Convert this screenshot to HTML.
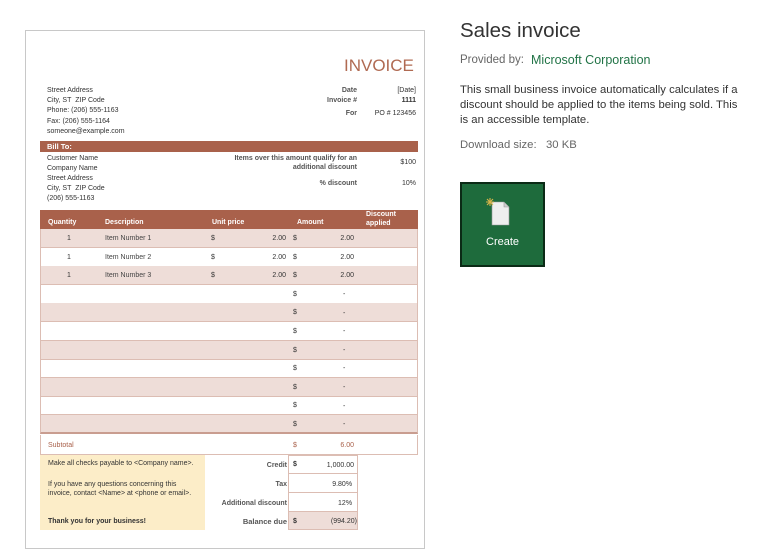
<!DOCTYPE html>
<html><head><meta charset="utf-8"><style>
*{margin:0;padding:0;box-sizing:border-box}
body{width:768px;height:559px;background:#fff;position:relative;overflow:hidden;font-family:"Liberation Sans",Arial,sans-serif}
.a{position:absolute;white-space:nowrap}
.doc{font-size:7px;color:#333;line-height:1}
.r{text-align:right}
.row{position:absolute;left:40px;width:378px;height:19px;border-bottom:1px solid #dcbdb3;border-left:1px solid #dcbdb3;border-right:1px solid #dcbdb3}
.sh{background:#eeddd8}
.w{color:#fff;font-weight:bold}
</style></head><body>
<div class="a" style="left:25px;top:30px;width:400px;height:519px;border:1px solid #c8c8c8"></div>

<div class="a" style="left:344px;top:56px;font-size:17px;color:#b06a52;">INVOICE</div>
<div class="a doc" style="left:47px;top:86px;line-height:10.2px">Street Address<br>City, ST&nbsp; ZIP Code<br>Phone: (206) 555-1163<br>Fax: (206) 555-1164<br>someone@example.com</div>
<div class="a doc r" style="left:300px;top:86px;width:57px;line-height:10px;font-weight:bold;color:#555">Date<br>Invoice #</div>
<div class="a doc r" style="left:300px;top:110px;width:57px;font-weight:bold;color:#555">For</div>
<div class="a doc r" style="left:370px;top:86px;width:46px;line-height:10px">[Date]<br><b>1111</b></div>
<div class="a doc r" style="left:360px;top:110px;width:56px">PO # 123456</div>

<div class="a" style="left:40px;top:141px;width:378px;height:11px;background:#a9614b"></div>
<div class="a doc w" style="left:47px;top:143px;font-size:7.5px">Bill To:</div>
<div class="a doc" style="left:47px;top:154px;line-height:10px">Customer Name<br>Company Name<br>Street Address<br>City, ST&nbsp; ZIP Code<br>(206) 555-1163</div>
<div class="a doc r" style="left:200px;top:154px;width:157px;line-height:9px;font-weight:bold;color:#555">Items over this amount qualify for an<br>additional discount</div>
<div class="a doc r" style="left:370px;top:159px;width:46px">$100</div>
<div class="a doc r" style="left:250px;top:180px;width:107px;font-weight:bold;color:#555">% discount</div>
<div class="a doc r" style="left:370px;top:180px;width:46px">10%</div>

<div class="a" style="left:40px;top:210px;width:378px;height:19px;background:#a9614b"></div>
<div class="a doc w" style="left:48px;top:219px">Quantity</div>
<div class="a doc w" style="left:105px;top:219px">Description</div>
<div class="a doc w" style="left:212px;top:219px">Unit price</div>
<div class="a doc w" style="left:297px;top:219px">Amount</div>
<div class="a doc w" style="left:366px;top:210px;line-height:9px">Discount<br>applied</div>

<div class="row sh" style="top:229px"></div>
<div class="row" style="top:248px"></div>
<div class="row sh" style="top:266px"></div>
<div class="row" style="top:285px"></div>
<div class="row sh" style="top:303px"></div>
<div class="row" style="top:322px"></div>
<div class="row sh" style="top:341px"></div>
<div class="row" style="top:359px"></div>
<div class="row sh" style="top:378px"></div>
<div class="row" style="top:396px"></div>
<div class="row sh" style="top:415px;border-bottom:2px solid #c99d90"></div>
<div class="row" style="top:435px;height:20px"></div>

<div class="a doc" style="left:67px;top:230px;line-height:18.6px">1<br>1<br>1</div>
<div class="a doc" style="left:105px;top:230px;line-height:18.6px;color:#444">Item Number 1<br>Item Number 2<br>Item Number 3</div>
<div class="a doc" style="left:211px;top:230px;line-height:18.6px">$<br>$<br>$</div>
<div class="a doc r" style="left:250px;top:230px;width:36px;line-height:18.6px">2.00<br>2.00<br>2.00</div>
<div class="a doc" style="left:293px;top:230px;line-height:18.6px">$<br>$<br>$<br>$<br>$<br>$<br>$<br>$<br>$<br>$<br>$</div>
<div class="a doc r" style="left:320px;top:230px;width:34px;line-height:18.6px">2.00<br>2.00<br>2.00</div>
<div class="a doc" style="left:343px;top:286px;line-height:18.6px">-<br>-<br>-<br>-<br>-<br>-<br>-<br>-</div>
<div class="a doc" style="left:48px;top:442px;color:#a9614b">Subtotal</div>
<div class="a doc" style="left:293px;top:442px;color:#a9614b">$</div>
<div class="a doc r" style="left:320px;top:442px;width:34px;color:#a9614b">6.00</div>

<div class="a" style="left:40px;top:455px;width:165px;height:75px;background:#fcedc8"></div>
<div class="a doc" style="left:48px;top:460px;color:#333">Make all checks payable to &lt;Company name&gt;.</div>
<div class="a doc" style="left:48px;top:480px;line-height:9px;color:#333">If you have any questions concerning this<br>invoice, contact &lt;Name&gt; at &lt;phone or email&gt;.</div>
<div class="a doc" style="left:48px;top:518px;font-weight:bold">Thank you for your business!</div>

<div class="a" style="left:288px;top:455px;width:70px;height:75px;border:1px solid #dcbdb3"></div>
<div class="a" style="left:288px;top:473px;width:70px;height:1px;background:#dcbdb3"></div>
<div class="a" style="left:288px;top:492px;width:70px;height:1px;background:#dcbdb3"></div>
<div class="a" style="left:288px;top:511px;width:70px;height:19px;background:#eeddd8;border:1px solid #dcbdb3"></div>
<div class="a doc r" style="left:200px;top:457px;width:87px;color:#555;font-weight:bold;line-height:18.8px">Credit<br>Tax<br>Additional discount<br><span style="font-size:7.5px">Balance due</span></div>
<div class="a doc" style="left:293px;top:461px;font-weight:bold">$</div>
<div class="a doc" style="left:293px;top:518px;font-weight:bold">$</div>
<div class="a doc r" style="left:300px;top:457px;width:54px;line-height:18.8px">1,000.00<br>9.80%&nbsp;<br>12%&nbsp;</div>
<div class="a doc r" style="left:300px;top:518px;width:57px">(994.20)</div>

<div class="a" style="left:460px;top:19px;font-size:20.5px;color:#333">Sales invoice</div>
<div class="a" style="left:460px;top:54px;font-size:11.5px;color:#666">Provided by:</div>
<div class="a" style="left:531px;top:53px;font-size:12.5px;color:#217346">Microsoft Corporation</div>
<div class="a" style="left:460px;top:83px;font-size:11.3px;color:#333;line-height:15px">This small business invoice automatically calculates if a<br>discount should be applied to the items being sold. This<br>is an accessible template.</div>
<div class="a" style="left:460px;top:139px;font-size:11.3px;color:#666">Download size:&nbsp;&nbsp; 30 KB</div>

<div class="a" style="left:460px;top:182px;width:85px;height:85px;background:#1e6b3c;border:2px solid #0b2a16"></div>
<svg class="a" style="left:484px;top:198px" width="30" height="30" viewBox="0 0 30 30">
<path d="M8 4h12l5 5v18H8z" fill="#eee" stroke="#999" stroke-width="0.6"/>
<path d="M20 4v5h5" fill="#ccc" stroke="#999" stroke-width="0.6"/>
<g stroke="#d9b44a" stroke-width="1.1"><path d="M6 0v8M2 4h8M3 1l6 6M9 1l-6 6"/></g>
</svg>
<div class="a" style="left:486px;top:236px;font-size:11px;color:#fff">Create</div>
</body></html>
